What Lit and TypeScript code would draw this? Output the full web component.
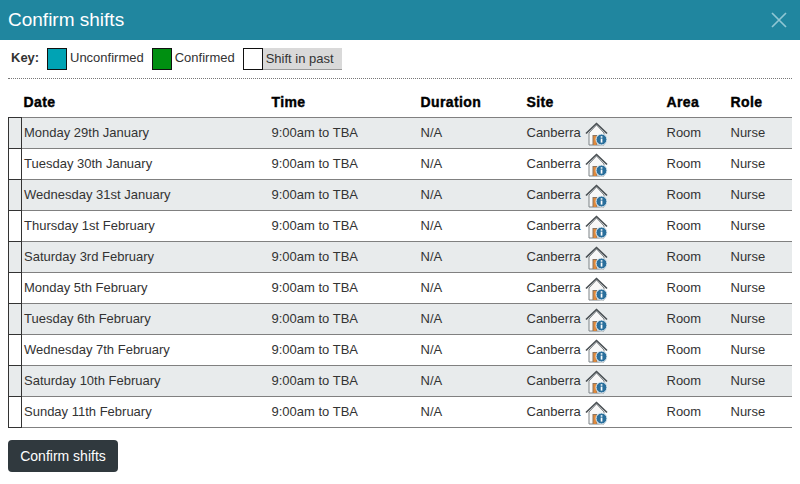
import { LitElement, html, css } from "lit";
import { customElement } from "lit/decorators.js";

const rows = [
  "Monday 29th January",
  "Tuesday 30th January",
  "Wednesday 31st January",
  "Thursday 1st February",
  "Saturday 3rd February",
  "Monday 5th February",
  "Tuesday 6th February",
  "Wednesday 7th February",
  "Saturday 10th February",
  "Sunday 11th February",
];

const houseIcon = html`<svg class="house" width="24" height="24" viewBox="0 0 24 24">
  <path d="M4 11 11.5 3 19 11V23H4Z" fill="#f8f8f8" stroke="#7d8387" stroke-width="1"/>
  <path d="M1 11.5 11.5 1.5 22 11.5" fill="none" stroke="#4a5054" stroke-width="1.7" stroke-linejoin="round"/>
  <rect x="7.5" y="13" width="4.5" height="10" fill="#8a7460"/>
  <rect x="8.5" y="14" width="3" height="9" fill="#e08a3c"/>
  <circle cx="16.5" cy="17.5" r="5.5" fill="#2a6f9c" stroke="#eef3f6" stroke-width="1"/>
  <rect x="15.7" y="16.6" width="1.7" height="4" fill="#fff"/>
  <rect x="15.7" y="14.2" width="1.7" height="1.5" fill="#fff"/>
</svg>`;

@customElement("app-root")
export class AppRoot extends LitElement {
  static styles = css`
    :host {
      display: block;
      width: 800px;
      height: 484px;
      background: #fff;
      font-family: "Liberation Sans", Arial, sans-serif;
      font-size: 13px;
      color: #333;
      overflow: hidden;
    }
    .title-bar {
      height: 40px;
      background: #20869f;
      display: flex;
      align-items: center;
      justify-content: space-between;
      padding: 0 13px 0 8px;
      box-sizing: border-box;
    }
    h1 {
      margin: 0;
      font-size: 19px;
      font-weight: 400;
      color: #fff;
    }
    .close {
      width: 16px;
      height: 16px;
      display: block;
    }
    .body {
      padding: 8px 8px 0;
    }
    .key {
      display: flex;
      align-items: flex-start;
      height: 22px;
      padding-bottom: 8px;
      border-bottom: 1px dotted #777;
    }
    .key b {
      margin: 2px 8px 0 3px;
      line-height: 15px;
      width: 28px;
    }
    .swatch {
      width: 18px;
      height: 20px;
      border: 1px solid #111;
      flex: none;
    }
    .key span {
      line-height: 15px;
      margin: 2px 8px 0 3px;
    }
    .past {
      background: #d9d9d9;
      height: 22px;
      width: 79px;
      box-sizing: border-box;
      padding: 3px 0 0 3px;
      line-height: 15px;
      border-bottom: 1px solid #999;
    }
    table {
      width: 784px;
      border-collapse: collapse;
      table-layout: fixed;
      margin-top: 8px;
    }
    th {
      height: 30px;
      padding: 0 0 0 1px;
      text-align: left;
      color: #000;
      font-size: 14px;
      font-weight: 700;
      -webkit-text-stroke: 0.4px #000;
      letter-spacing: 0.4px;
    }
    td {
      height: 29px;
      padding: 0 0 1px 1px;
      border-top: 1px solid #808080;
      border-bottom: 1px solid #808080;
      white-space: nowrap;
    }
    th:nth-child(2),
    td:nth-child(2) {
      padding-left: 2px;
    }
    tbody tr:nth-child(odd) td {
      background: #e8ebec;
    }
    td.mark {
      padding: 0;
      border: 1px solid #333;
    }
    .site {
      display: flex;
      align-items: center;
      gap: 4px;
      height: 29px;
    }
    .house {
      display: block;
      flex: none;
      margin-top: 2px;
    }
    button {
      display: block;
      margin-top: 12px;
      width: 110px;
      height: 32px;
      background: #30393e;
      color: #fff;
      border: none;
      border-radius: 4px;
      font: 14px "Liberation Sans", Arial, sans-serif;
      padding: 0;
    }
  `;

  render() {
    return html`
      <div class="title-bar">
        <h1>Confirm shifts</h1>
        <svg class="close" viewBox="0 0 16 16">
          <path d="M1 1 15 15M15 1 1 15" stroke="#8fc6d3" stroke-width="1.7" fill="none"/>
        </svg>
      </div>
      <div class="body">
        <div class="key">
          <b>Key:</b>
          <div class="swatch" style="background:#00a3b4"></div>
          <span>Unconfirmed</span>
          <div class="swatch" style="background:#008f11"></div>
          <span>Confirmed</span>
          <div class="swatch" style="background:#fff"></div>
          <div class="past">Shift in past</div>
        </div>
        <table>
          <colgroup>
            <col style="width:13px" />
            <col style="width:249px" />
            <col style="width:149px" />
            <col style="width:106px" />
            <col style="width:140px" />
            <col style="width:64px" />
            <col />
          </colgroup>
          <thead>
            <tr>
              <th></th><th>Date</th><th>Time</th><th>Duration</th><th>Site</th><th>Area</th><th>Role</th>
            </tr>
          </thead>
          <tbody>
            ${rows.map(
              (d) => html`<tr>
                <td class="mark"></td>
                <td>${d}</td>
                <td>9:00am to TBA</td>
                <td>N/A</td>
                <td><div class="site">Canberra ${houseIcon}</div></td>
                <td>Room</td>
                <td>Nurse</td>
              </tr>`
            )}
          </tbody>
        </table>
        <button>Confirm shifts</button>
      </div>
    `;
  }
}
